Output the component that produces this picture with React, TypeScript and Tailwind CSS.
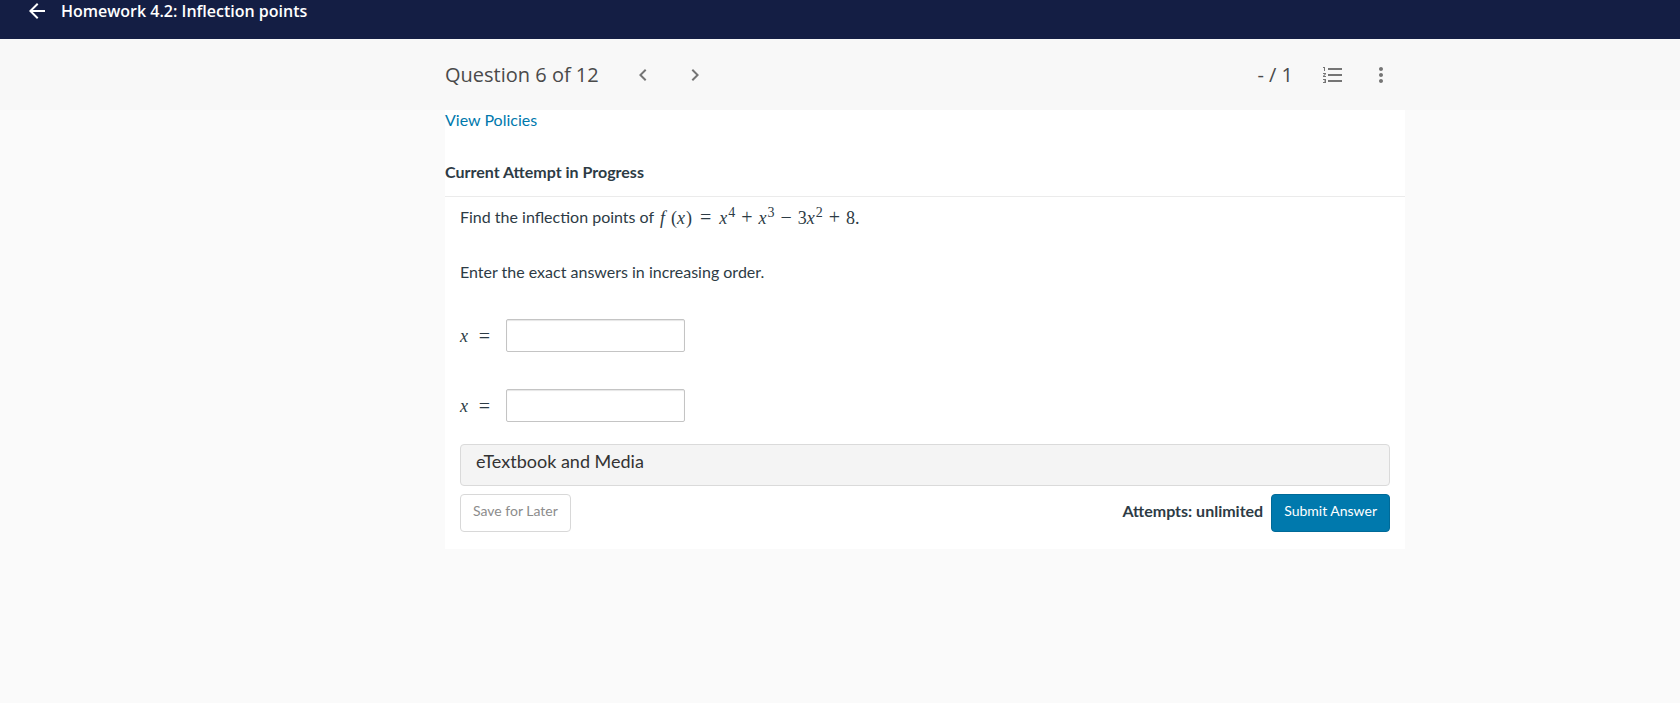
import React from "react";

function Icon({ d, className = "" }: { d: string; className?: string }) {
  return (
    <svg viewBox="0 0 24 24" className={`size-6 shrink-0 fill-current ${className}`} aria-hidden="true">
      <path d={d} />
    </svg>
  );
}

const BACK = "M20 11H7.83l5.59-5.59L12 4l-8 8 8 8 1.41-1.41L7.83 13H20v-2z";
const PREV = "M15.41 7.41L14 6l-6 6 6 6 1.41-1.41L10.83 12z";
const NEXT = "M10 6L8.59 7.41 13.17 12l-4.58 4.59L10 18l6-6z";
const LIST =
  "M2 17h2v.5H3v1h1v.5H2v1h3v-4H2v1zm1-9h1V4H2v1h1v3zm-1 3h1.8L2 13.1v.9h3v-1H3.2L5 10.9V10H2v1zm5-6v2h14V5H7zm0 14h14v-2H7v2zm0-6h14v-2H7v2z";
const MORE =
  "M12 8c1.1 0 2-.9 2-2s-.9-2-2-2-2 .9-2 2 .9 2 2 2zm0 2c-1.1 0-2 .9-2 2s.9 2 2 2 2-.9 2-2-.9-2-2-2zm0 6c-1.1 0-2 .9-2 2s.9 2 2 2 2-.9 2-2-.9-2-2-2z";

const SERIF = "font-['Liberation_Serif',serif]";

function Power({ exp }: { exp: string }) {
  return (
    <span>
      <i>x</i>
      <sup className="ml-px text-sm">{exp}</sup>
    </span>
  );
}

function Op({ children }: { children: string }) {
  return <span className="mx-1.5 text-xl">{children}</span>;
}

function AnswerRow({ id }: { id: string }) {
  return (
    <div className="flex items-center gap-4">
      <label htmlFor={id} className={`flex w-[30px] items-center justify-between text-lg ${SERIF}`}>
        <i>x</i>
        <span className="text-xl">=</span>
      </label>
      <input
        id={id}
        type="text"
        className="h-[33px] w-[179px] rounded-xs border border-[#c4c4c4] bg-white px-2 shadow-[inset_0_1px_1px_rgba(0,0,0,0.1)]"
      />
    </div>
  );
}

export default function App() {
  return (
    <div className="min-h-screen bg-[#fafafa] font-['Lato',sans-serif] text-base text-[#2d3b45]">
      <header className="bg-[#141e44] pb-[17px] font-['Open_Sans',sans-serif] text-white">
        <div className="flex h-[22px] items-center gap-3 px-[25px]">
          <button type="button" aria-label="Back">
            <Icon d={BACK} />
          </button>
          <h1 className="text-base font-semibold">Homework 4.2: Inflection points</h1>
        </div>
      </header>

      <nav className="bg-[#f8f8f8] pl-[170px] font-['Open_Sans',sans-serif] text-[#4a4a4a]">
        <div className="mx-auto flex h-[71px] max-w-[960px] items-center justify-between">
          <div className="flex items-center">
            <h2 className="mr-8 text-xl">Question 6 of 12</h2>
            <div className="flex gap-7 text-[#757575]">
              <button type="button" aria-label="Previous question">
                <Icon d={PREV} />
              </button>
              <button type="button" aria-label="Next question">
                <Icon d={NEXT} />
              </button>
            </div>
          </div>
          <div className="flex items-center pr-3">
            <span className="mr-7 text-xl">- / 1</span>
            <div className="flex gap-6 text-[#757575]">
              <button type="button" aria-label="Question list">
                <Icon d={LIST} />
              </button>
              <button type="button" aria-label="More options">
                <Icon d={MORE} />
              </button>
            </div>
          </div>
        </div>
      </nav>

      <div className="pl-[170px]">
        <main className="mx-auto max-w-[960px] bg-white pb-[17px]">
          <a href="#policies" className="block leading-5 text-[#0079ad]">
            View Policies
          </a>
          <h3 className="border-b border-[#ebebeb] pt-[30px] pb-3 font-bold">Current Attempt in Progress</h3>

          <div className="px-[15px]">
            <p className="flex h-10 items-center whitespace-pre">
              Find the inflection points of{" "}
              <span className={`text-lg ${SERIF}`}>
                <i className="mr-1.5 ml-0.5">f</i>(<i className="mr-px">x</i>)
                <span className="mx-2 text-xl">=</span>
                <Power exp="4" />
                <Op>+</Op>
                <Power exp="3" />
                <Op>−</Op>3<Power exp="2" />
                <Op>+</Op>8.
              </span>
            </p>
            <p className="mt-[23px]">Enter the exact answers in increasing order.</p>

            <div className="mt-[35px] flex flex-col gap-[37px]">
              <AnswerRow id="answer-1" />
              <AnswerRow id="answer-2" />
            </div>

            <button
              type="button"
              className="mt-[22px] block h-[42px] w-full rounded-sm border border-[#dadada] bg-[#f4f4f4] px-[15px] pb-2 text-left text-lg text-[#333333]"
            >
              eTextbook and Media
            </button>

            <div className="mt-2 flex items-center justify-between">
              <button
                type="button"
                className="h-[38px] rounded-sm border border-[#d8d8d8] bg-white px-3 pb-1 text-sm text-[#8c8c8c]"
              >
                Save for Later
              </button>
              <div className="flex items-center gap-2">
                <span className="pb-1 font-bold">Attempts: unlimited</span>
                <button
                  type="button"
                  className="h-[38px] rounded-sm border border-[#006a98] bg-[#0079ad] px-3 pb-1 text-sm text-white"
                >
                  Submit Answer
                </button>
              </div>
            </div>
          </div>
        </main>
      </div>
    </div>
  );
}
